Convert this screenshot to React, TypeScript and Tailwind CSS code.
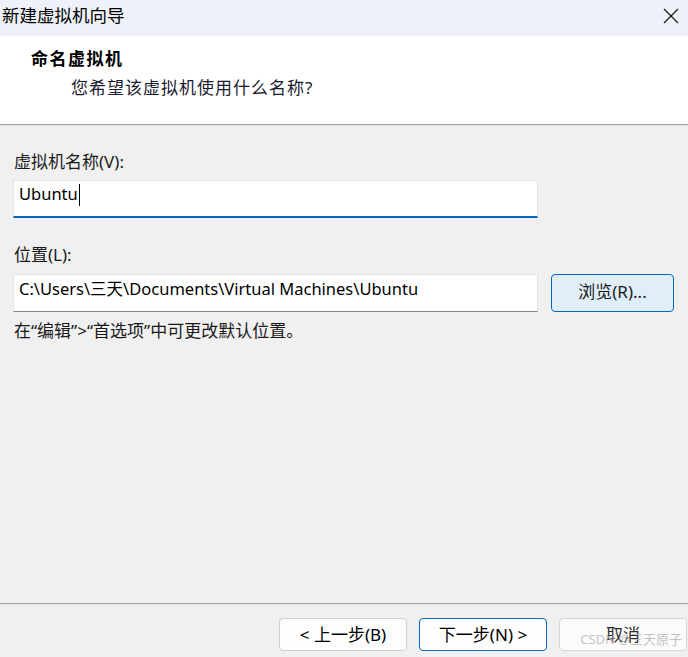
const font = { fontFamily: '"Noto Sans", "Noto Sans CJK SC", sans-serif' };

function Field({ value, focused }: { value: string; focused?: boolean }) {
  return (
    <div
      className={
        "flex h-[38px] w-[525px] items-center border border-[#e3e3e3] bg-white pb-[8px] pl-[5px] text-[16.5px] text-black " +
        (focused ? "border-b-2 border-b-[#0067c0]" : "border-b-[#8a8a8a]")
      }
    >
      <span>{value}</span>
      {focused && <span className="ml-px h-[22px] w-px bg-black" />}
    </div>
  );
}

export default function App() {
  return (
    <div className="relative flex h-[657px] w-[688px] flex-col overflow-hidden bg-[#f0f0f0]" style={font}>
      <div className="flex h-[36px] items-center justify-between bg-[#eef2f8] pb-[5px] pl-[2px] pr-[5px]">
        <span className="text-[17.5px] leading-none text-black">新建虚拟机向导</span>
        <svg width="16" height="16" viewBox="0 0 16 16" className="mr-[4px]">
          <path d="M1 1 L15 15 M15 1 L1 15" stroke="#1a1a1a" strokeWidth="1.3" fill="none" />
        </svg>
      </div>

      <div className="h-[89px] border-b border-[#a3a3a3] bg-white pl-[31px] pt-[12px]">
        <div className="text-[17px] font-bold leading-[22px] tracking-[1.5px] text-black">命名虚拟机</div>
        <div className="ml-[40px] mt-[7px] text-[17px] leading-[22px] tracking-[1px] text-[#1a1a2e]">
          您希望该虚拟机使用什么名称?
        </div>
      </div>
      <div className="h-px bg-[#e6e6e6]" />

      <div className="flex-1 px-[13px] pt-[25px] text-[17px] text-[#1a1a1a]">
        <div className="pl-px leading-[22px]">虚拟机名称(V):</div>
        <div className="mt-[7px]">
          <Field value="Ubuntu" focused />
        </div>
        <div className="mt-[26px] pl-px leading-[22px]">位置(L):</div>
        <div className="mt-[8px] flex items-center gap-[13px]">
          <Field value="C:\Users\三天\Documents\Virtual Machines\Ubuntu" />
          <button className="flex h-[38px] w-[123px] items-center justify-center rounded-[4px] border border-[#0067c0] bg-[#e0eef9] pb-[2px] text-[17px] text-[#1a1a1a]">
            浏览(R)...
          </button>
        </div>
        <div className="mt-[8px] pl-px leading-[22px]">在“编辑”&gt;“首选项”中可更改默认位置。</div>
      </div>

      <div className="h-px bg-[#a3a3a3]" />
      <div className="h-px bg-[#e6e6e6]" />
      <div className="flex h-[52px] items-start gap-[12px] pl-[279px] pt-[13px]">
        <button className="flex h-[33px] w-[128px] shrink-0 items-center justify-center rounded-[4px] border border-[#d0d0d0] bg-[#fdfdfd] text-[17px] text-black">
          &lt; 上一步(B)
        </button>
        <button className="flex h-[33px] w-[128px] shrink-0 items-center justify-center rounded-[4px] border border-[#0067c0] bg-[#fdfdfd] text-[17px] text-black">
          下一步(N) &gt;
        </button>
        <button className="flex h-[33px] w-[128px] shrink-0 items-center justify-center rounded-[4px] border border-[#d6d6d6] bg-[#fbfbfb] text-[17px] text-[#2a2a2a]">
          取消
        </button>
      </div>

      <div className="absolute bottom-[11px] right-[6px] text-[13px] leading-none text-[#bdbdbd]/90">
        CSDN @三天原子
      </div>
    </div>
  );
}
